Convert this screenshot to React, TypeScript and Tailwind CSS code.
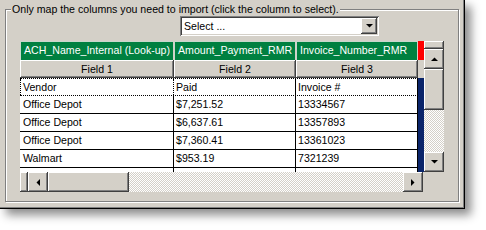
const raisedCls =
  "bg-[#d4d0c8] shadow-[inset_-1px_-1px_#404040,inset_1px_1px_#fff,inset_-2px_-2px_#808080,inset_2px_2px_#d4d0c8]";

const trackCls =
  "bg-[repeating-conic-gradient(#ffffff_0_25%,#d4d0c8_0_50%)] bg-[length:2px_2px]";

function Arrow({ dir }: { dir: "up" | "down" | "left" | "right" }) {
  const pts = {
    up: "0,4 7,4 3.5,0.5",
    down: "0,0 7,0 3.5,3.5",
    left: "4,0 4,7 0.5,3.5",
    right: "0,0 0,7 3.5,3.5",
  }[dir];
  const vertical = dir === "up" || dir === "down";
  return (
    <svg
      width={vertical ? 7 : 4}
      height={vertical ? 4 : 7}
      viewBox={vertical ? "0 0 7 4" : "0 0 4 7"}
      className="block"
    >
      <polygon points={pts} fill="#000" />
    </svg>
  );
}

const columns = [
  { head: "ACH_Name_Internal (Look-up)", field: "Field 1", w: "w-[154px]" },
  { head: "Amount_Payment_RMR", field: "Field 2", w: "w-[122px]" },
  { head: "Invoice_Number_RMR", field: "Field 3", w: "w-[122px]" },
];

const rows = [
  ["Office Depot", "$7,251.52", "13334567"],
  ["Office Depot", "$6,637.61", "13357893"],
  ["Office Depot", "$7,360.41", "13361023"],
  ["Walmart", "$953.19", "7321239"],
];

export default function App() {
  return (
    <div className="w-[486px] h-[230px] bg-white font-['Liberation_Sans',Arial,sans-serif] text-[10.6px] leading-[13px] text-black overflow-hidden">
      <div className="w-[465px] h-[209px] bg-[#d4d0c8] border-r border-b border-black shadow-[inset_-1px_-1px_#808080,6px_6px_9px_rgba(0,0,0,0.45)] pt-[9px] pl-[5px]">
        <div className="relative w-[454px] h-[193px] border border-[#808080] shadow-[inset_1px_1px_#fff,1px_1px_#fff]">
          <span className="absolute left-[5px] -top-[7px] bg-[#d4d0c8] px-[1px] whitespace-nowrap">
            Only map the columns you need to import (click the column to select).
          </span>

          <div className="pt-[6px]">
            <div className="ml-[174px] w-[199px] h-[20px] bg-white flex items-center shadow-[inset_1px_1px_#808080,inset_-1px_-1px_#fff,inset_2px_2px_#404040,inset_-2px_-2px_#d4d0c8] p-[2px]">
              <span className="flex-1 pl-[2px]">Select ...</span>
              <div className={`${raisedCls} w-[16px] h-[16px] flex items-center justify-center`}>
                <Arrow dir="down" />
              </div>
            </div>

            <div className="ml-[14px] mt-[5px] flex">
              <div className="w-[404px] flex flex-col">
                {/* header */}
                <div className="flex h-[19px]">
                  {columns.map((c) => (
                    <div
                      key={c.head}
                      className={`${c.w} h-full bg-[#008040] text-white flex items-center pl-[4px] border-r border-[#d4d0c8] shadow-[inset_1px_1px_#c8d8cc] whitespace-nowrap overflow-hidden`}
                    >
                      {c.head}
                    </div>
                  ))}
                  <div className="w-[6px] h-full bg-[#ff0000]" />
                </div>
                {/* field row */}
                <div className="flex h-[18px]">
                  {columns.map((c) => (
                    <div
                      key={c.field}
                      className={`${c.w} h-full flex items-center justify-center ${raisedCls}`}
                    >
                      {c.field}
                    </div>
                  ))}
                  <div className="w-[6px] h-full bg-[#d4d0c8]" />
                </div>
                {/* data */}
                <div className="flex">
                  <div className="w-[398px] bg-white">
                    <div className="flex h-[18px] border-y border-dotted border-black">
                      <div className="w-[154px] border-l border-dotted border-black border-r border-r-solid pl-[2px] flex items-center">
                        Vendor
                      </div>
                      <div className="w-[122px] border-r border-black pl-[2px] flex items-center">
                        Paid
                      </div>
                      <div className="w-[122px] border-r border-black pl-[2px] flex items-center">
                        Invoice #
                      </div>
                    </div>
                    {rows.map((r, i) => (
                      <div key={i} className="flex h-[18px] border-b border-black">
                        <div className="w-[154px] border-r border-black pl-[3px] flex items-center">
                          {r[0]}
                        </div>
                        <div className="w-[122px] border-r border-black pl-[2px] flex items-center">
                          {r[1]}
                        </div>
                        <div className="w-[122px] border-r border-black pl-[2px] flex items-center">
                          {r[2]}
                        </div>
                      </div>
                    ))}
                    <div className="flex h-[4px]">
                      <div className="w-[154px] border-r border-black" />
                      <div className="w-[122px] border-r border-black" />
                      <div className="w-[122px] border-r border-black" />
                    </div>
                  </div>
                  <div className="w-[6px] bg-[#0a246a]" />
                </div>
                {/* horizontal scrollbar */}
                <div className="flex h-[20px] w-[403px]">
                  <div className={`${raisedCls} w-[8px] h-full`} />
                  <div className={`${raisedCls} w-[20px] h-full flex items-center justify-center`}>
                    <Arrow dir="left" />
                  </div>
                  <div className={`${raisedCls} w-[81px] h-full`} />
                  <div className={`${trackCls} flex-1 h-full`} />
                  <div className={`${raisedCls} w-[20px] h-full flex items-center justify-center`}>
                    <Arrow dir="right" />
                  </div>
                </div>
              </div>

              {/* vertical scrollbar */}
              <div className="w-[20px] flex flex-col">
                <div className={`${raisedCls} h-[8px]`} />
                <div className={`${raisedCls} h-[20px] flex items-center justify-center`}>
                  <Arrow dir="up" />
                </div>
                <div className={`${raisedCls} h-[41px]`} />
                <div className={`${trackCls} h-[42px]`} />
                <div className={`${raisedCls} h-[20px] flex items-center justify-center`}>
                  <Arrow dir="down" />
                </div>
                <div className="h-[20px] bg-[#d4d0c8]" />
              </div>
            </div>
          </div>
        </div>
      </div>
    </div>
  );
}
